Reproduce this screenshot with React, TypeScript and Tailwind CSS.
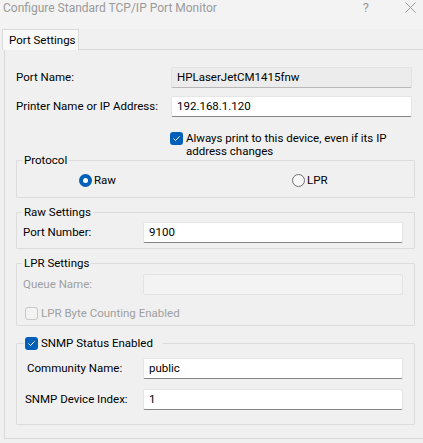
import React from "react";

const font = { fontFamily: 'Roboto, "Noto Sans", sans-serif' };

function Check({ disabled }: { disabled?: boolean }) {
  if (disabled) {
    return <span className="block w-[13px] h-[13px] shrink-0 rounded-[3px] border border-[#c8c8c8] bg-[#f3f3f3]" />;
  }
  return (
    <span className="flex w-[13px] h-[13px] shrink-0 items-center justify-center rounded-[3px] bg-[#005fb8]">
      <svg width="9" height="9" viewBox="0 0 9 9" fill="none">
        <path d="M1.8 4.8 L3.6 6.5 L7.3 2.6" stroke="white" strokeWidth="1" strokeLinecap="round" strokeLinejoin="round" />
      </svg>
    </span>
  );
}

function Radio({ checked }: { checked?: boolean }) {
  if (checked) {
    return (
      <span className="flex w-[13px] h-[13px] shrink-0 items-center justify-center rounded-full bg-[#005fb8]">
        <span className="block w-[5px] h-[5px] rounded-full bg-white" />
      </span>
    );
  }
  return <span className="block w-[13px] h-[13px] shrink-0 rounded-full border border-[#6f6f6f] bg-[#f7f7f7]" />;
}

function TextBox({ value, w, variant = "normal" }: { value?: string; w: string; variant?: "normal" | "readonly" | "disabled" }) {
  const cls =
    variant === "readonly"
      ? "bg-[#ececec] border-[#e2e2e2] border-b-[#b8b8b8]"
      : variant === "disabled"
      ? "bg-[#f3f3f3] border-[#e3e3e3]"
      : "bg-white border-[#e5e5e5] border-b-[#858585]";
  return (
    <div className={`${w} h-[21px] border ${cls} flex items-center pl-[5px] text-[11.5px] text-black rounded-[2px] whitespace-nowrap`}>
      {value}
    </div>
  );
}

export default function App() {
  return (
    <div className="w-[423px] h-[443px] bg-[#f0f0f0] overflow-hidden text-[11.5px] text-black whitespace-nowrap" style={font}>
      {/* title bar */}
      <div className="h-[29px] bg-[#f3f3f3] flex items-start">
        <div className="pl-[3px] pt-[1px] text-[12px] leading-[14px] text-[#9a9a9a]">
          Configure Standard TCP/IP Port Monitor
        </div>
        <div className="ml-auto flex items-start">
          <span className="text-[13px] leading-[14px] pt-[1px] text-[#9a9a9a] mr-[36px]">?</span>
          <svg width="11" height="11" viewBox="0 0 11 11" className="mr-[7px] mt-[2px]">
            <path d="M0.5 0.5 L10.5 10.5 M10.5 0.5 L0.5 10.5" stroke="#9a9a9a" strokeWidth="1" />
          </svg>
        </div>
      </div>
      {/* tab */}
      <div className="h-[20px] flex">
        <div className="ml-[2px] w-[77px] h-[21px] bg-[#f9f9f9] border border-b-0 border-[#d9d9d9] flex items-center pl-[6px] relative z-10 leading-[14px]">
          Port Settings
        </div>
      </div>
      {/* panel */}
      <div className="ml-[4px] w-[430px] h-[390px] border-t border-l border-b border-[#d9d9d9] pl-[11px]">
        <div className="mt-[17px] flex items-center h-[21px]">
          <div className="w-[155px]">Port Name:</div>
          <TextBox w="w-[241px]" value="HPLaserJetCM1415fnw" variant="readonly" />
        </div>
        <div className="mt-[8px] flex items-center h-[21px]">
          <div className="w-[155px]">Printer Name or IP Address:</div>
          <TextBox w="w-[241px]" value="192.168.1.120" />
        </div>
        <div className="mt-[15px] flex items-start ml-[154px]">
          <Check />
          <div className="ml-[3px] leading-[13px] w-[230px] whitespace-normal">
            Always print to this device, even if its IP
            <br />
            address changes
          </div>
        </div>

        {/* Protocol */}
        <fieldset className="-mt-[5px] w-[399px] h-[45px] border border-[#dcdcdc] rounded-[1px]">
          <legend className="ml-[5px] px-[2px] leading-[14px]">Protocol</legend>
          <div className="mt-[7px] flex items-center h-[13px]">
            <div className="ml-[62px] flex items-center">
              <Radio checked />
              <span className="ml-[2px]">Raw</span>
            </div>
            <div className="ml-[176px] flex items-center">
              <Radio />
              <span className="ml-[2px]">LPR</span>
            </div>
          </div>
        </fieldset>

        {/* Raw Settings */}
        <fieldset className="mt-[7px] w-[399px] h-[44px] border border-[#dcdcdc] rounded-[1px]">
          <legend className="ml-[5px] px-[2px] leading-[14px]">Raw Settings</legend>
          <div className="mt-[3px] flex items-center h-[21px] pl-[6px]">
            <div className="w-[120px]">Port Number:</div>
            <TextBox w="w-[260px]" value="9100" />
          </div>
        </fieldset>

        {/* LPR Settings */}
        <fieldset className="mt-[7px] w-[399px] h-[70px] border border-[#dcdcdc] rounded-[1px]">
          <legend className="ml-[5px] px-[2px] leading-[14px]">LPR Settings</legend>
          <div className="mt-[4px] flex items-center h-[21px] pl-[6px]">
            <div className="w-[120px] text-[#a0a0a0]">Queue Name:</div>
            <TextBox w="w-[260px]" variant="disabled" />
          </div>
          <div className="mt-[12px] flex items-center pl-[8px] h-[13px]">
            <Check disabled />
            <span className="ml-[3px] text-[#a0a0a0]">LPR Byte Counting Enabled</span>
          </div>
        </fieldset>

        {/* SNMP */}
        <fieldset className="mt-[10px] w-[399px] h-[89px] border border-[#dcdcdc] rounded-[1px]">
          <legend className="ml-[7px] pl-[1px] pr-[10px] h-[14px] flex items-center">
            <Check />
            <span className="ml-[3px] leading-[14px]">SNMP Status Enabled</span>
          </legend>
          <div className="mt-[8px] flex items-center h-[21px] pl-[10px]">
            <div className="w-[116px]">Community Name:</div>
            <TextBox w="w-[260px]" value="public" />
          </div>
          <div className="mt-[10px] flex items-center h-[21px] pl-[8px]">
            <div className="w-[118px]">SNMP Device Index:</div>
            <TextBox w="w-[260px]" value="1" />
          </div>
        </fieldset>
      </div>
    </div>
  );
}
